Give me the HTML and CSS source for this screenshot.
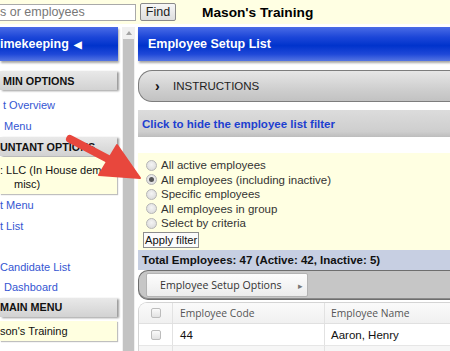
FILE: index.html
```html
<!DOCTYPE html>
<html>
<head>
<meta charset="utf-8">
<link rel="stylesheet" href="styles.css">
</head>
<body>
<div class="page">
  <div class="topbar">
    <input class="search" type="text" placeholder="s or employees">
    <button class="find">Find</button>
    <div class="title">Mason's Training</div>
  </div>
  <div class="main">
    <aside class="sidebar">
      <div class="bluehead side">imekeeping <span class="tri">&#9664;</span></div>
      <div class="grayhead first">MIN OPTIONS</div>
      <div class="links one">
        <a class="lnk">t Overview</a>
        <a class="lnk ind4">Menu</a>
      </div>
      <div class="grayhead">UNTANT OPTIONS</div>
      <div class="ybox two">
        <div>: LLC (In House dem</div>
        <div class="ind14">misc)</div>
      </div>
      <div class="links two">
        <a class="lnk">t Menu</a>
        <a class="lnk">t List</a>
        <a class="lnk"></a>
        <a class="lnk">Candidate List</a>
        <a class="lnk ind4">Dashboard</a>
      </div>
      <div class="grayhead">MAIN MENU</div>
      <div class="ybox single">son's Training</div>
    </aside>
    <div class="scroll">
      <div class="up"><span class="uptri"></span></div>
      <div class="thumb"></div>
    </div>
    <section class="content">
      <div class="bluehead main-head">Employee Setup List</div>
      <div class="instructions"><span class="chev">&#8250;</span>INSTRUCTIONS</div>
      <div class="filterbar">Click to hide the employee list filter</div>
      <div class="filterbox">
        <label class="opt"><span class="radio"></span>All active employees</label>
        <label class="opt"><span class="radio on"></span>All employees (including inactive)</label>
        <label class="opt"><span class="radio"></span>Specific employees</label>
        <label class="opt"><span class="radio"></span>All employees in group</label>
        <label class="opt"><span class="radio"></span>Select by criteria</label>
        <button class="apply">Apply filter</button>
      </div>
      <div class="totals">Total Employees: 47 (Active: 42, Inactive: 5)</div>
      <div class="toolbar">
        <button class="optbtn">Employee Setup Options <span class="arr">&#9656;</span></button>
      </div>
      <div class="table">
        <div class="row head">
          <div class="c1"><span class="cb"></span></div>
          <div class="c2">Employee Code</div>
          <div class="c3">Employee Name</div>
        </div>
        <div class="row data">
          <div class="c1"><span class="cb"></span></div>
          <div class="c2">44</div>
          <div class="c3">Aaron, Henry</div>
        </div>
        <div class="row data alt">
          <div class="c1"><span class="cb"></span></div>
          <div class="c2"></div>
          <div class="c3"></div>
        </div>
      </div>
    </section>
  </div>
  <svg class="annot" width="450" height="351" viewBox="0 0 450 351">
    <line x1="70" y1="139" x2="112" y2="161" stroke="#e8473d" stroke-width="8" stroke-linecap="round"/>
    <polygon points="117,145 140,178 99,175" fill="#e8473d" stroke="#e8473d" stroke-width="2" stroke-linejoin="round"/>
  </svg>
</div>
</body>
</html>
```
FILE: styles.css
```css
* { box-sizing: border-box; }
html, body { margin: 0; padding: 0; }
body {
  width: 450px;
  height: 351px;
  overflow: hidden;
  background: #fff;
  font-family: "Liberation Sans", Arial, sans-serif;
  color: #111;
}
.page { position: relative; width: 450px; height: 351px; overflow: hidden; }

/* top bar */
.topbar {
  height: 24px;
  background: #ffffe3;
  display: flex;
  align-items: center;
}
.search {
  margin-left: -5px;
  width: 141px;
  height: 17px;
  border: 1px solid #a9a9a9;
  padding: 0 0 0 4px;
  font-family: "Liberation Sans", Arial, sans-serif;
  font-size: 12.5px;
  background: #fff;
  outline: none;
}
.search::placeholder { color: #777; }
.find {
  margin-left: 4px;
  width: 36px;
  height: 18px;
  padding: 0;
  border: 1px solid #8a8a8a;
  border-radius: 2px;
  background: linear-gradient(#f7f7f7, #dedede);
  font-family: "Liberation Sans", Arial, sans-serif;
  font-size: 12.5px;
  color: #222;
}
.title {
  margin-left: 26px;
  font-weight: bold;
  font-size: 13.7px;
  color: #000;
}

/* main layout */
.main {
  display: flex;
  margin-top: 3px;
  height: 324px;
}
.sidebar { width: 119px; flex: none; }
.scroll {
  width: 13px;
  margin-left: 3px;
  flex: none;
  background: #f0f0f0;
  display: flex;
  flex-direction: column;
}
.up {
  height: 12px;
  display: flex;
  justify-content: center;
  align-items: center;
}
.uptri {
  width: 0; height: 0;
  border-left: 3.5px solid transparent;
  border-right: 3.5px solid transparent;
  border-bottom: 4px solid #a3a3a3;
}
.thumb {
  flex: 1;
  margin: 0 1px;
  background: #c3c3c3;
}
.content { flex: 1; margin-left: 3px; min-width: 0; }

/* blue headers */
.bluehead {
  height: 34px;
  display: flex;
  align-items: center;
  color: #fff;
  font-weight: bold;
  font-size: 12.5px;
  background: linear-gradient(#4a6ce6 0%, #1c46d8 30%, #0033cc 55%, #1f48d8 80%, #5575e2 100%);
  box-shadow: 1px 2px 2px rgba(0,0,0,0.35);
}
.side { width: 118px; }
.tri { margin-left: 5px; font-size: 10px; }
.main-head { padding-left: 10px; }

/* sidebar */
.grayhead {
  width: 117px;
  height: 19px;
  display: flex;
  align-items: center;
  font-weight: bold;
  font-size: 10.8px;
  color: #111;
  background: linear-gradient(#e9e9e9, #d2d2d2);
  box-shadow: 2px 1px 2px rgba(0,0,0,0.4);
}
.grayhead.first { margin-top: 10px; padding-left: 3px; }
.links { display: flex; flex-direction: column; }
.links.one { padding-top: 5px; }
.links.one .lnk { height: 21px; line-height: 21px; padding-left: 3px; }
.links.two { padding-top: 1px; }
.links.two .lnk { height: 20.5px; line-height: 20.5px; }
.lnk { color: #3456d2; font-size: 11px; white-space: nowrap; }
.ind4 { padding-left: 4px !important; }
.ybox {
  width: 117px;
  background: #ffffe0;
  font-size: 11px;
  color: #111;
  box-shadow: 1px 1px 1px rgba(0,0,0,0.25);
  white-space: nowrap;
  overflow: hidden;
}
.ybox.two { margin-top: 1px; padding: 6px 0 3px 0; line-height: 14px; }
.ind14 { padding-left: 14px; }
.ybox.single { margin-top: 4px; height: 20px; line-height: 20px; }

/* content */
.instructions {
  margin-top: 9px;
  height: 32px;
  display: flex;
  align-items: center;
  border: 1px solid #7d7d7d;
  border-right: none;
  border-radius: 14px 0 0 14px;
  background: linear-gradient(#e6e6e6, #cfcfcf 60%, #c2c2c2);
  font-size: 11.5px;
  color: #222;
  white-space: nowrap;
}
.chev {
  font-weight: bold;
  font-size: 14px;
  margin-left: 16px;
  width: 18px;
  line-height: 12px;
  color: #111;
}
.filterbar {
  margin-top: 8px;
  height: 27px;
  display: flex;
  align-items: center;
  padding-left: 4px;
  background: linear-gradient(#dcdcdc, #cecece 80%, #bdbdbd);
  color: #1d3fd0;
  font-weight: bold;
  font-size: 11.5px;
  white-space: nowrap;
}
.filterbox {
  margin-top: 16px;
  height: 97px;
  background: #ffffe2;
  padding: 5px 0 0 8px;
  display: flex;
  flex-direction: column;
  align-items: flex-start;
}
.opt {
  display: flex;
  align-items: center;
  height: 14.5px;
  font-size: 11.5px;
  color: #333;
  white-space: nowrap;
}
.radio {
  width: 11px;
  height: 11px;
  border-radius: 50%;
  border: 1px solid #b5b5b5;
  background: radial-gradient(circle at 50% 40%, #f4f4f4, #d6d6d6);
  margin-right: 4px;
  display: flex;
  align-items: center;
  justify-content: center;
}
.radio.on::after {
  content: "";
  width: 5px;
  height: 5px;
  border-radius: 50%;
  background: #555;
}
.apply {
  margin: 1px 0 0 -3px;
  height: 16px;
  padding: 0 1px;
  border: 1px solid #8d8d8d;
  background: #fbfbfb;
  font-family: "Liberation Sans", Arial, sans-serif;
  font-size: 11.2px;
  color: #111;
}
.totals {
  height: 20px;
  display: flex;
  align-items: center;
  padding-left: 4px;
  background: #c7cfe2;
  font-weight: bold;
  font-size: 11.5px;
  color: #111;
  white-space: nowrap;
}
.toolbar {
  height: 30px;
  display: flex;
  align-items: center;
  padding-left: 7px;
  border: 1px solid #6e6e6e;
  border-right: none;
  border-radius: 10px 0 0 10px;
  background: #c6c6c6;
  box-shadow: inset 0 -1px 0 #8a8a8a;
}
.optbtn {
  height: 24px;
  width: 162px;
  padding: 0 0 0 13px;
  text-align: left;
  border: 1px solid #b3b3b3;
  border-radius: 2px;
  background: linear-gradient(#fdfdfd, #ececec);
  font-family: "Open Sans", "Noto Sans", sans-serif;
  font-size: 10.6px;
  color: #333;
  white-space: nowrap;
}
.arr { font-size: 9px; color: #777; margin-left: 14px; }

.table {
  margin-top: 2px;
  border-top: 1px solid #d4d4d4;
  border-left: 1px solid #d4d4d4;
  border-radius: 9px 0 0 0;
  overflow: hidden;
}
.row { display: flex; }
.row > div { display: flex; align-items: center; }
.c1 { width: 34px; justify-content: center; border-right: 1px solid #e2e2e2; }
.c2 { width: 152px; padding-left: 7px; border-right: 1px solid #e2e2e2; }
.c3 { flex: 1; padding-left: 6px; }
.head {
  height: 21px;
  background: linear-gradient(#fafafa, #f0f0f0);
  border-bottom: 1px solid #e0e0e0;
  font-family: "Open Sans", "Noto Sans", sans-serif;
  font-size: 10.3px;
  color: #555;
}
.data {
  height: 22px;
  font-size: 11.5px;
  color: #111;
  border-bottom: 1px solid #e6e6e6;
}
.data.alt { background: #f6f6f6; }
.cb {
  width: 10px;
  height: 10px;
  border: 1px solid #bcbcbc;
  border-radius: 2px;
  background: linear-gradient(#fafafa, #e2e2e2);
}

.annot { position: absolute; left: 0; top: 0; pointer-events: none; }
```
